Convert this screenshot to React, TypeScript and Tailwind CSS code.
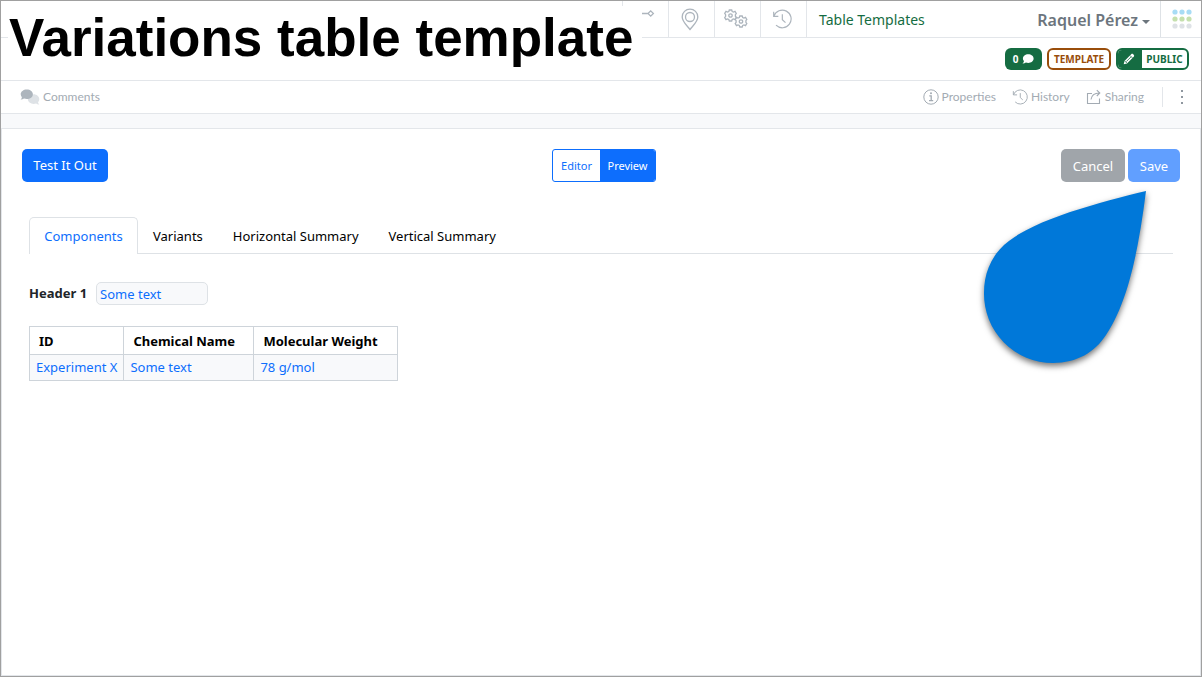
import React from 'react';

function HistoryIcon({ className }: { className: string }) {
  return (
    <svg className={className} viewBox="0 0 24 24" fill="none" stroke="currentColor" strokeWidth="1.4" aria-hidden="true">
      <path d="M2 3.2v5.6h5.6M2.3 8.6A10.6 10.6 0 1 1 4.8 19.4M12.4 6.2v6.6l3.8 3.6" />
    </svg>
  );
}

function ConnectorIcon() {
  return (
    <svg className="h-6 w-6" viewBox="0 0 24 24" fill="none" stroke="currentColor" strokeWidth="1.3" aria-hidden="true">
      <path d="M3 6.5h13M16 6.5l2.700-2.700 2.700 2.700-2.700 2.700zM7 19h3M2 19l2.700-2.700 2.700 2.700-2.700 2.700z" />
    </svg>
  );
}

function PinIcon() {
  return (
    <svg className="h-6 w-6" viewBox="0 0 24 24" fill="none" stroke="currentColor" strokeWidth="1.3" aria-hidden="true">
      <path d="M12 22.5C9 18.5 4.2 14.5 4.2 9.9a7.8 7.8 0 0 1 15.6 0C19.8 14.5 15 18.5 12 22.5z" />
      <circle cx="12" cy="10" r="4.5" />
    </svg>
  );
}

const GEAR =
  'M-1.2-5.5h2.4l.5 1.5 1.3.6 1.5-.7 1.3 2-.9 1.2v1.8l.9 1.2-1.3 2-1.5-.7-1.3.6-.5 1.5h-2.4l-.5-1.5-1.3-.6-1.5.7-1.3-2 .9-1.2v-1.8l-.9-1.2 1.3-2 1.5.7 1.3-.6z';

function GearsIcon() {
  return (
    <svg className="h-6 w-6" viewBox="0 0 24 24" fill="none" stroke="currentColor" strokeWidth="1.3" aria-hidden="true">
      <g transform="translate(6.5 8.5)">
        <path d={GEAR} />
        <circle r="1.7" />
      </g>
      <g transform="translate(17 14.5)">
        <path d={GEAR} />
        <circle r="1.7" />
      </g>
    </svg>
  );
}

function InfoIcon() {
  return (
    <svg className="h-4 w-4" viewBox="0 0 16 16" fill="none" stroke="currentColor" strokeWidth="1" aria-hidden="true">
      <circle cx="8" cy="8" r="7.2" />
      <path d="M6.3 6.8h1.9v4.7M6 11.7h4.2" strokeWidth="1.3" />
      <circle cx="8" cy="4.3" r="1" fill="currentColor" stroke="none" />
    </svg>
  );
}

function ShareIcon() {
  return (
    <svg className="h-4 w-4" viewBox="0 0 16 16" fill="none" stroke="currentColor" strokeWidth="1.1" aria-hidden="true">
      <path d="M6 4.5H1.5v10h12V9.5M5 10.5C5.5 6.5 8 4 13.5 4M10.8 1.2 13.8 4l-3 3" />
    </svg>
  );
}

function CommentsIcon() {
  return (
    <svg className="h-4 w-5" viewBox="0 0 20 16" aria-hidden="true">
      <path d="M13.5 5.2c3.3 0 5.8 2.2 5.8 4.9 0 1.3-.5 2.4-1.3 3.3.2.8.7 1.4 1.3 2-1.2.1-2.3-.3-3.2-.9-4 1.3-8-.8-8.3-4.2z" fill="#dee2e6" />
      <path d="M6.8.5C3.4.5.7 2.6.7 5.3c0 1.1.5 2.1 1.2 2.9C1.7 9.3 1.2 10 .5 10.6c1.3.1 2.5-.3 3.5-1 .9.3 1.8.5 2.8.5 3.4 0 6.1-2.1 6.1-4.8S10.2.5 6.8.5z" fill="#adb5bd" />
    </svg>
  );
}

function BubbleIcon() {
  return (
    <svg className="h-3 w-3" viewBox="0 0 12 12" fill="currentColor" aria-hidden="true">
      <path d="M6.2 1.2c-3 0-5.3 1.9-5.3 4.3 0 1 .4 1.9 1.1 2.6C1.8 9.2 1.3 10 .5 10.6c1.3.1 2.5-.3 3.4-1 .7.2 1.5.3 2.3.3 3 0 5.4-1.900 5.4-4.400S9.200 1.200 6.200 1.200z" />
    </svg>
  );
}

function PencilIcon() {
  return (
    <svg className="h-3 w-3" viewBox="0 0 12 12" aria-hidden="true">
      <path d="M.7 11.3 1.500 8 8.200 1.300c.6-.6 1.400-.6 2 0l.5.5c.6.6.6 1.400 0 2L4 10.500z" fill="white" />
      <path d="m3.300 8.600 4.800-4.800M7 2.500 9.500 5M2 8.200 3.800 10" stroke="#156c42" strokeWidth=".8" />
    </svg>
  );
}

function AppsIcon() {
  const rows = ['#a8dcf5', '#c5e0ae', '#dee2e6'];
  return (
    <svg className="h-5 w-5" viewBox="0 0 20 20" aria-hidden="true">
      {rows.map((fill, r) => [0, 1, 2].map((c) => <circle key={`${r}${c}`} cx={3 + c * 7} cy={3 + r * 7} r="2.6" fill={fill} />))}
    </svg>
  );
}

function DropPointer() {
  return (
    <svg className="pointer-events-none absolute top-9 right-6 h-[190px] w-[180px]" viewBox="0 0 180 190" aria-hidden="true">
      <path
        className="drop-shadow-[0_3px_3px_rgba(0,0,0,0.55)]"
        d="M170 6C125 17 55 35 28 60C14 73 8 90 8 108A69 69 0 0 0 77 178C101 178 119 167 130 150C153 116 163 61 170 6z"
        fill="#0078d9"
      />
    </svg>
  );
}

const navItems = [
  { label: 'Links', icon: <ConnectorIcon /> },
  { label: 'Inventory', icon: <PinIcon /> },
  { label: 'Configuration', icon: <GearsIcon /> },
  { label: 'Recent', icon: <HistoryIcon className="h-5 w-5" /> },
];

const tabs = ['Components', 'Variants', 'Horizontal Summary', 'Vertical Summary'];

export default function App() {
  return (
    <div className="relative flex min-h-screen flex-col border border-[#a0a0a0] bg-white font-['Noto_Sans',sans-serif] text-[13px] leading-5 text-black">
      <header className="flex h-[37px] justify-end border-b border-[#e3e6ea]">
        <nav className="flex flex-1 justify-end text-[#adb5bd]">
          {navItems.map((item) => (
            <a key={item.label} href="#nav" aria-label={item.label} className="flex w-[46px] items-center justify-center border-l border-[#e3e6ea] pr-[3px]">
              {item.icon}
            </a>
          ))}
        </nav>
        <div className="flex w-[395px] items-center border-l border-[#e3e6ea] pl-3">
          <a href="#templates" className="pt-0.5 text-sm text-[#156c42]">Table Templates</a>
          <button type="button" className="ml-auto flex items-center gap-1 pt-0.5 pr-2.5 text-base font-semibold text-[#6c757d]">
            Raquel Pérez
            <span className="mt-1 border-x-4 border-t-4 border-x-transparent border-t-[#6c757d]" />
          </button>
          <button type="button" aria-label="Apps" className="flex h-full w-[41px] items-center justify-center border-l border-[#dee2e6] pl-px">
            <AppsIcon />
          </button>
        </div>
      </header>

      <div className="flex h-[43px] items-center justify-end gap-[5px] border-b border-[#e3e6ea] pr-3 text-[10px] font-bold">
        <button type="button" className="flex h-[22px] w-[37px] items-center justify-center gap-1 rounded-md bg-[#156c42] text-white">
          0 <BubbleIcon />
        </button>
        <span className="flex h-[22px] w-16 items-center justify-center rounded-md border-2 border-[#994d0b] text-[#994d0b]">TEMPLATE</span>
        <button type="button" className="flex h-[22px] w-[73px] items-center overflow-hidden rounded-md border-2 border-[#156c42] text-[#156c42]">
          <span className="flex h-full w-6 items-center justify-center bg-[#156c42] pr-0.5"><PencilIcon /></span>
          <span className="flex-1">PUBLIC</span>
        </button>
      </div>

      <div className="flex h-[33px] items-center border-b border-[#e3e6ea] pl-[19px] font-['Lato','Noto_Sans',sans-serif] text-xs text-[#a3abb3]">
        <a href="#comments" className="flex items-center gap-[3px]"><CommentsIcon />Comments</a>
        <div className="ml-auto flex items-center gap-4">
          <a href="#properties" className="flex items-center gap-[3px]"><InfoIcon />Properties</a>
          <a href="#history" className="flex items-center gap-[3px]"><HistoryIcon className="h-4 w-4" />History</a>
          <a href="#sharing" className="flex items-center gap-[3px]"><ShareIcon />Sharing</a>
        </div>
        <button type="button" aria-label="More" className="ml-[18px] flex h-5 w-[39px] items-center justify-center border-l border-[#e3e6ea]">
          <svg className="h-4 w-1" viewBox="0 0 4 16" fill="#8f979f" aria-hidden="true">
            <rect x="1" y="1" width="2" height="2" /><rect x="1" y="7" width="2" height="2" /><rect x="1" y="13" width="2" height="2" />
          </svg>
        </button>
      </div>

      <div className="h-3.5 bg-[#f8f9fb]" />

      <main className="flex-1 border border-[#e3e6ea] px-5 pt-5">
        <div className="grid grid-cols-3 items-start">
          <button type="button" className="h-[33px] w-[86px] rounded-[5px] bg-[#0d6efd] pb-0.5 text-white">Test It Out</button>
          <div className="ml-1.5 flex h-[33px] w-[104px] justify-self-center overflow-hidden rounded-[3px] border border-[#0d6efd] text-[11px]">
            <button type="button" className="w-[47px] text-[#0d6efd]">Editor</button>
            <button type="button" className="flex-1 bg-[#0d6efd] text-white">Preview</button>
          </div>
          <div className="relative flex gap-[3px] justify-self-end">
            <button type="button" className="h-[33px] w-16 rounded-[5px] bg-[#a0a5aa] text-white">Cancel</button>
            <button type="button" className="h-[33px] w-[52px] rounded-[5px] bg-[#619fff] text-white">Save</button>
            <DropPointer />
          </div>
        </div>

        <section className="pt-[35px] pr-[7px] pl-[7px]">
          <div role="tablist" className="flex h-[37px] border-b border-[#dee2e6]">
            {tabs.map((tab, i) => (
              <button
                key={tab}
                type="button"
                role="tab"
                aria-selected={i === 0}
                className={i === 0 ? '-mb-px w-[109px] rounded-t-[5px] border border-b-0 border-[#dee2e6] bg-white text-[#0d6efd]' : 'px-[15px] pt-0.5'}
              >
                {tab}
              </button>
            ))}
          </div>

          <div className="flex items-center gap-[9px] pt-7">
            <label htmlFor="header-one" className="pb-0.5 font-bold text-[#212529]">Header 1</label>
            <input id="header-one" defaultValue="Some text" className="h-[23px] w-28 rounded-[5px] border border-[#dee2e6] bg-[#f8f9fb] px-[3px] text-[#0d6efd]" />
          </div>

          <table className="mt-[21px] border-collapse text-left">
            <thead>
              <tr className="h-7">
                <th className="w-[94px] border border-[#ced4da] px-[9px] font-bold">ID</th>
                <th className="w-[130px] border border-[#ced4da] px-[9px] font-bold">Chemical Name</th>
                <th className="w-36 border border-[#ced4da] px-[9px] font-bold">Molecular Weight</th>
              </tr>
            </thead>
            <tbody>
              <tr className="h-[26px] bg-[#f8f9fb] whitespace-nowrap text-[#0d6efd]">
                <td className="border border-[#ced4da] px-1.5 pb-0.5">Experiment X</td>
                <td className="border border-[#ced4da] px-1.5 pb-0.5">Some text</td>
                <td className="border border-[#ced4da] px-1.5 pb-0.5">78 g/mol</td>
              </tr>
            </tbody>
          </table>
        </section>
      </main>

      <h1 className="absolute top-[5px] left-[7px] h-[68px] w-[634px] bg-white pl-px font-['Liberation_Sans',sans-serif] text-[53px] leading-[64px] font-bold whitespace-nowrap">
        Variations table template
      </h1>
    </div>
  );
}
